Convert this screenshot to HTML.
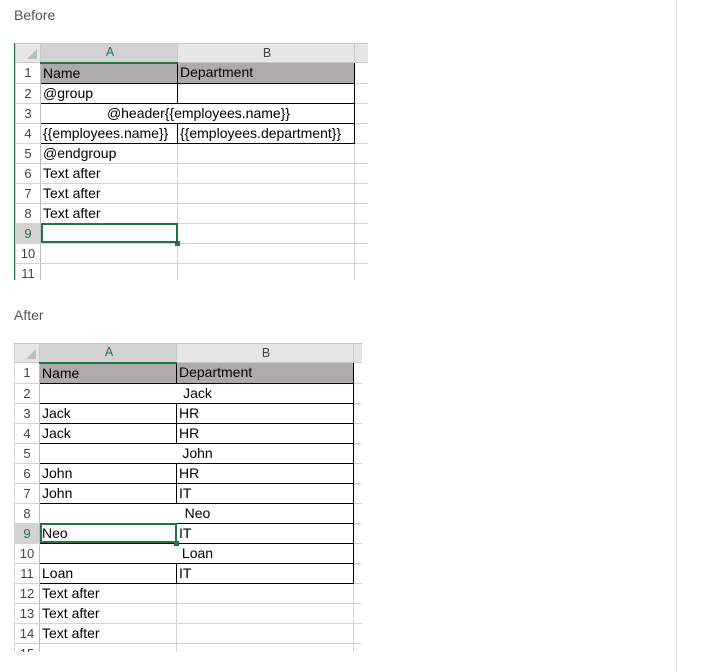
<!DOCTYPE html>
<html><head><meta charset="utf-8"><style>
body{margin:0;width:717px;height:672px;background:#fff;position:relative;overflow:hidden;font-family:"Liberation Sans",sans-serif;}
.lbl{position:absolute;left:14px;font-size:14px;color:#555;}
.vl{position:absolute;left:676px;top:0;width:1px;height:672px;background:#dde0e0;}
.sheet{position:absolute;left:14px;overflow:hidden;}
table{border-collapse:collapse;table-layout:fixed;font-size:14px;color:#000;}
td{height:20px;padding:0 0 0 2px;border:1px solid #d4d4d4;white-space:nowrap;overflow:visible;line-height:19px;box-sizing:border-box;}
tr.h td{background:#e6e6e6;color:#444;text-align:center;font-size:12.5px;border-color:#c8c8c8;height:19px;line-height:17px;}
tr.h td.sel{background:#d2d2d2;color:#217346;border-bottom:2px solid #217346;}
td.rh{text-align:center;color:#444;font-size:13px;padding:0;background:#fff;border-color:#d4d4d4 #bdbdbd #d4d4d4 #d4d4d4;}
td.rhs{background:#d2d2d2;color:#217346;}
td.k{border:1px solid #000;}
td.g{background:#aeaaaa;}
td.c{text-align:center;}
td.sc{outline:2px solid #217346;outline-offset:-2px;position:relative;}
td.sc:after{content:"";position:absolute;right:-3px;bottom:-3px;width:5px;height:5px;background:#217346;}
.corner{position:absolute;width:0;height:0;border-left:10px solid transparent;border-bottom:10px solid #bcbcbc;}
tr{height:20px;}
tr.h{height:19px;}
</style></head><body>
<div class="lbl" style="top:7px">Before</div>
<div class="lbl" style="top:307px">After</div>
<div class="vl"></div>

<div class="sheet" style="top:43px;width:353px;height:237px;border-left:1px solid #217346;">
<table style="width:365px">
<colgroup><col style="width:25px"><col style="width:137px"><col style="width:177px"><col style="width:26px"></colgroup>
<tr class="h"><td style="position:relative"><span class="corner" style="right:3px;bottom:3px"></span></td><td class="sel">A</td><td>B</td><td></td></tr>
<tr><td class="rh">1</td><td class="k g">Name</td><td class="k g">Department</td><td></td></tr>
<tr><td class="rh">2</td><td class="k">@group</td><td class="k"></td><td></td></tr>
<tr><td class="rh">3</td><td class="k c" colspan="2">@header{{employees.name}}</td><td></td></tr>
<tr><td class="rh">4</td><td class="k">{{employees.name}}</td><td class="k">{{employees.department}}</td><td></td></tr>
<tr><td class="rh">5</td><td>@endgroup</td><td></td><td></td></tr>
<tr><td class="rh">6</td><td>Text after</td><td></td><td></td></tr>
<tr><td class="rh">7</td><td>Text after</td><td></td><td></td></tr>
<tr><td class="rh">8</td><td>Text after</td><td></td><td></td></tr>
<tr><td class="rh rhs">9</td><td class="sc"></td><td></td><td></td></tr>
<tr><td class="rh">10</td><td></td><td></td><td></td></tr>
<tr><td class="rh">11</td><td></td><td></td><td></td></tr>
</table></div>

<div class="sheet" style="top:343px;width:348px;height:309px;">
<table style="width:360px">
<colgroup><col style="width:25px"><col style="width:137px"><col style="width:177px"><col style="width:21px"></colgroup>
<tr class="h"><td style="position:relative"><span class="corner" style="right:3px;bottom:3px"></span></td><td class="sel">A</td><td>B</td><td></td></tr>
<tr><td class="rh">1</td><td class="k g">Name</td><td class="k g">Department</td><td></td></tr>
<tr><td class="rh">2</td><td class="k c" colspan="2">Jack</td><td></td></tr>
<tr><td class="rh">3</td><td class="k">Jack</td><td class="k">HR</td><td></td></tr>
<tr><td class="rh">4</td><td class="k">Jack</td><td class="k">HR</td><td></td></tr>
<tr><td class="rh">5</td><td class="k c" colspan="2">John</td><td></td></tr>
<tr><td class="rh">6</td><td class="k">John</td><td class="k">HR</td><td></td></tr>
<tr><td class="rh">7</td><td class="k">John</td><td class="k">IT</td><td></td></tr>
<tr><td class="rh">8</td><td class="k c" colspan="2">Neo</td><td></td></tr>
<tr><td class="rh rhs">9</td><td class="k sc">Neo</td><td class="k">IT</td><td></td></tr>
<tr><td class="rh">10</td><td class="k c" colspan="2">Loan</td><td></td></tr>
<tr><td class="rh">11</td><td class="k">Loan</td><td class="k">IT</td><td></td></tr>
<tr><td class="rh">12</td><td>Text after</td><td></td><td></td></tr>
<tr><td class="rh">13</td><td>Text after</td><td></td><td></td></tr>
<tr><td class="rh">14</td><td>Text after</td><td></td><td></td></tr>
<tr><td class="rh">15</td><td></td><td></td><td></td></tr>
</table></div>
</body></html>
